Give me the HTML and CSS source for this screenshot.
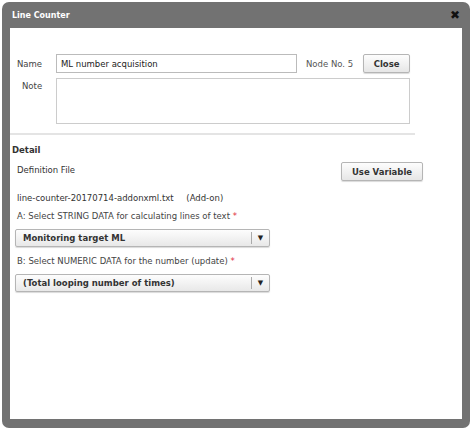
FILE: index.html
```html
<!DOCTYPE html>
<html lang="en">
<head>
	<meta charset="UTF-8">
	<title>Line Counter</title>
	<link rel="stylesheet" href="styles.css">
</head>
<body>
	<div class="dialog">
		<div class="dialog-title">
			<span>Line Counter</span>
			<span class="dialog-x">&#10006;</span>
		</div>
		<div class="dialog-body">
			<div class="head">
				<div class="row">
					<label class="lbl lbl-name">Name</label>
					<input class="txt" type="text" value="ML number acquisition">
					<span class="node-no">Node No. 5</span>
					<button class="btn btn-close">Close</button>
				</div>
				<div class="row row-note">
					<label class="lbl lbl-note">Note</label>
					<textarea class="note"></textarea>
				</div>
			</div>

			<div class="detail">
				<div class="detail-title">Detail</div>
				<div class="def-row">
					<span class="def-lbl">Definition File</span>
					<button class="btn btn-var">Use Variable</button>
				</div>
				<div class="file-row">
					<span>line-counter-20170714-addonxml.txt</span>
					<span class="addon">(Add-on)</span>
				</div>
				<div class="field-lbl">A: Select STRING DATA for calculating lines of text <span class="req">*</span></div>
				<div class="select">
					<span class="select-val">Monitoring target ML</span>
					<span class="select-arrow">&#9660;</span>
				</div>
				<div class="field-lbl field-b">B: Select NUMERIC DATA for the number (update) <span class="req">*</span></div>
				<div class="select">
					<span class="select-val">(Total looping number of times)</span>
					<span class="select-arrow">&#9660;</span>
				</div>
			</div>
		</div>
	</div>
</body>
</html>
```

FILE: styles.css
```css
* {
	margin: 0;
	padding: 0;
	box-sizing: border-box;
}

body {
	font-family: "DejaVu Sans", Verdana, sans-serif;
	font-size: 8.5px;
	color: #333;
	background: #fff;
}

.dialog {
	margin: 2px;
	width: 468px;
	height: 426px;
	background: #727272;
	border-radius: 7px;
	padding: 0 8px 9px 8px;
	display: flex;
	flex-direction: column;
}

.dialog-title {
	height: 26px;
	display: flex;
	align-items: center;
	justify-content: space-between;
	padding: 0 2px 0 2px;
	color: #fff;
	font-weight: bold;
	font-size: 8px;
}

.dialog-x {
	color: #111;
	font-size: 12px;
	font-weight: bold;
}

.dialog-body {
	flex: 1;
	background: #fff;
}

.head {
	padding: 26px 0 9px 0;
	width: 405px;
	border-bottom: 2px solid #e4e4e4;
}

.row {
	display: flex;
	align-items: center;
}

.lbl {
	width: 46px;
	color: #444;
}

.lbl-name {
	padding-left: 7px;
}

.lbl-note {
	padding-left: 12px;
	align-self: flex-start;
	padding-top: 3px;
}

.txt {
	width: 241px;
	height: 19px;
	border: 1px solid #bbb;
	font-family: inherit;
	font-size: 8.5px;
	color: #222;
	padding: 0 4px;
}

.node-no {
	margin-left: 9px;
	color: #555;
}

.btn {
	font-family: inherit;
	font-weight: bold;
	font-size: 8.5px;
	color: #333;
	height: 19px;
	border: 1px solid #b5b5b5;
	border-radius: 2px;
	background: linear-gradient(#fdfdfd, #e6e6e6);
	box-shadow: 0 1px 1px rgba(0, 0, 0, 0.15);
}

.btn-close {
	margin-left: 10px;
	width: 47px;
}

.row-note {
	margin-top: 5px;
}

.note {
	width: 354px;
	height: 46px;
	border: 1px solid #ccc;
	resize: none;
}

.detail {
	padding: 10px 0 0 2px;
}

.detail-title {
	font-weight: bold;
	color: #333;
}

.def-row {
	display: flex;
	align-items: flex-start;
	justify-content: space-between;
	width: 411px;
	padding-left: 5px;
	margin-top: 5px;
}

.def-lbl {
	padding-top: 5px;
}

.btn-var {
	width: 82px;
	margin-top: 2px;
}

.file-row {
	padding-left: 5px;
	margin-top: 12px;
}

.addon {
	margin-left: 10px;
}

.field-lbl {
	padding-left: 5px;
	margin-top: 8px;
	color: #444;
}

.field-b {
	margin-top: 9px;
}

.req {
	color: #e03040;
}

.select {
	margin: 8px 0 0 3px;
	width: 255px;
	height: 18px;
	border: 1px solid #b5b5b5;
	border-radius: 2px;
	background: linear-gradient(#fdfdfd, #e8e8e8);
	box-shadow: 0 1px 1px rgba(0, 0, 0, 0.15);
	display: flex;
	align-items: center;
	justify-content: space-between;
	font-weight: bold;
	color: #333;
}

.select-val {
	padding-left: 7px;
}

.select-arrow {
	width: 18px;
	height: 12px;
	border-left: 1px solid #aaa;
	text-align: center;
	font-size: 7px;
	line-height: 12px;
	color: #222;
}
```
